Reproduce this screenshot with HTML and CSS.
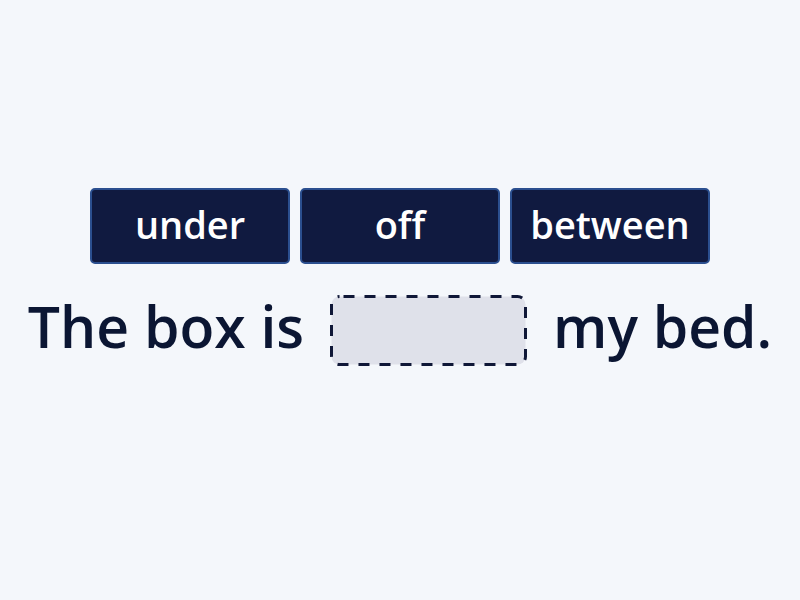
FILE: index.html
```html
<!DOCTYPE html>
<html>
<head>
<meta charset="utf-8">
<link rel="stylesheet" href="styles.css">
</head>
<body>
<main class="stage">
  <div class="options">
    <div class="option">under</div>
    <div class="option">off</div>
    <div class="option">between</div>
  </div>
  <div class="sentence">
    <span class="words">The box is</span>
    <span class="slot">
      <svg class="slot-frame" width="197" height="71" viewBox="0 0 197 71">
        <rect x="1.5" y="1.5" width="194" height="68" rx="8" ry="8" fill="#dfe1ea" stroke="#0f1737" stroke-width="3" stroke-dasharray="11 10" stroke-dashoffset="-4"/>
      </svg>
    </span>
    <span class="words">my bed.</span>
  </div>
</main>
</body>
</html>
```
FILE: styles.css
```css
html, body {
  margin: 0;
  padding: 0;
  background: #f4f7fb;
  width: 800px;
  height: 600px;
  overflow: hidden;
}
.stage {
  display: flex;
  flex-direction: column;
  align-items: center;
  padding-top: 188px;
  font-family: "Open Sans", "Noto Sans", sans-serif;
}
.options {
  display: flex;
  gap: 10px;
}
.option {
  width: 196px;
  height: 72px;
  box-sizing: content-box;
  border: 2px solid #2b4f8f;
  border-radius: 5px;
  background: #101a40;
  color: #ffffff;
  font-size: 38px;
  font-weight: 600;
  line-height: 1;
  padding-bottom: 4px;
  height: 68px;
  display: flex;
  align-items: center;
  justify-content: center;
}
.sentence {
  display: flex;
  align-items: center;
  gap: 26px;
  margin-top: 31px;
  color: #0b1633;
  font-size: 57px;
  font-weight: 600;
  line-height: 1;
}
.words {
  padding-bottom: 8px;
}
.slot {
  display: block;
  width: 197px;
  height: 71px;
}
.slot-frame {
  display: block;
}
```
